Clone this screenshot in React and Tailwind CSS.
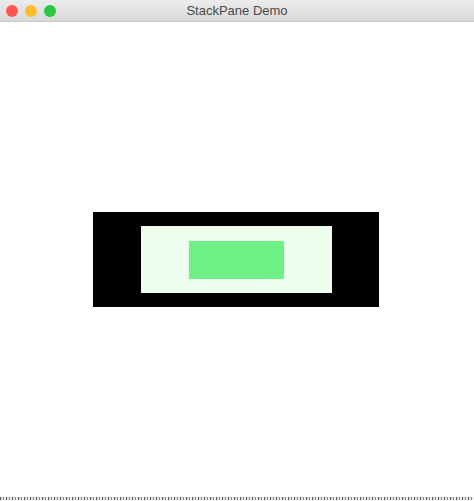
export default function App() {
  return (
    <div className="flex h-[501px] w-[474px] flex-col bg-white font-['Helvetica','Liberation_Sans',sans-serif]">
      {/* window title bar */}
      <div className="relative flex h-[22px] shrink-0 items-center justify-center border-b border-[#c8c8c8] bg-gradient-to-b from-[#ececec] to-[#d9d9d9]">
        <div className="absolute left-[6px] top-[5px] flex gap-[7px]">
          <span className="h-[12px] w-[12px] rounded-full bg-[#fd5753]" />
          <span className="h-[12px] w-[12px] rounded-full bg-[#febb2e]" />
          <span className="h-[12px] w-[12px] rounded-full bg-[#28c840]" />
        </div>
        <span className="text-[13px] leading-none text-[#4a4a4a]">StackPane Demo</span>
      </div>

      {/* stack pane */}
      <div className="flex flex-1 items-center justify-center pr-[2px]">
        <div className="flex h-[95px] w-[286px] items-center justify-center bg-black">
          <div className="flex h-[67px] w-[191px] items-center justify-center bg-[#edfdee]">
            <div className="h-[38px] w-[95px] bg-[#6ff285]" />
          </div>
        </div>
      </div>

      <div className="h-[3px] shrink-0 bg-[repeating-linear-gradient(90deg,#555_0px,#555_1px,#ddd_1px,#ddd_3px,#888_3px,#888_4px,#eee_4px,#eee_6px)]" />
      <div className="h-[1px] shrink-0 bg-white" />
    </div>
  );
}
